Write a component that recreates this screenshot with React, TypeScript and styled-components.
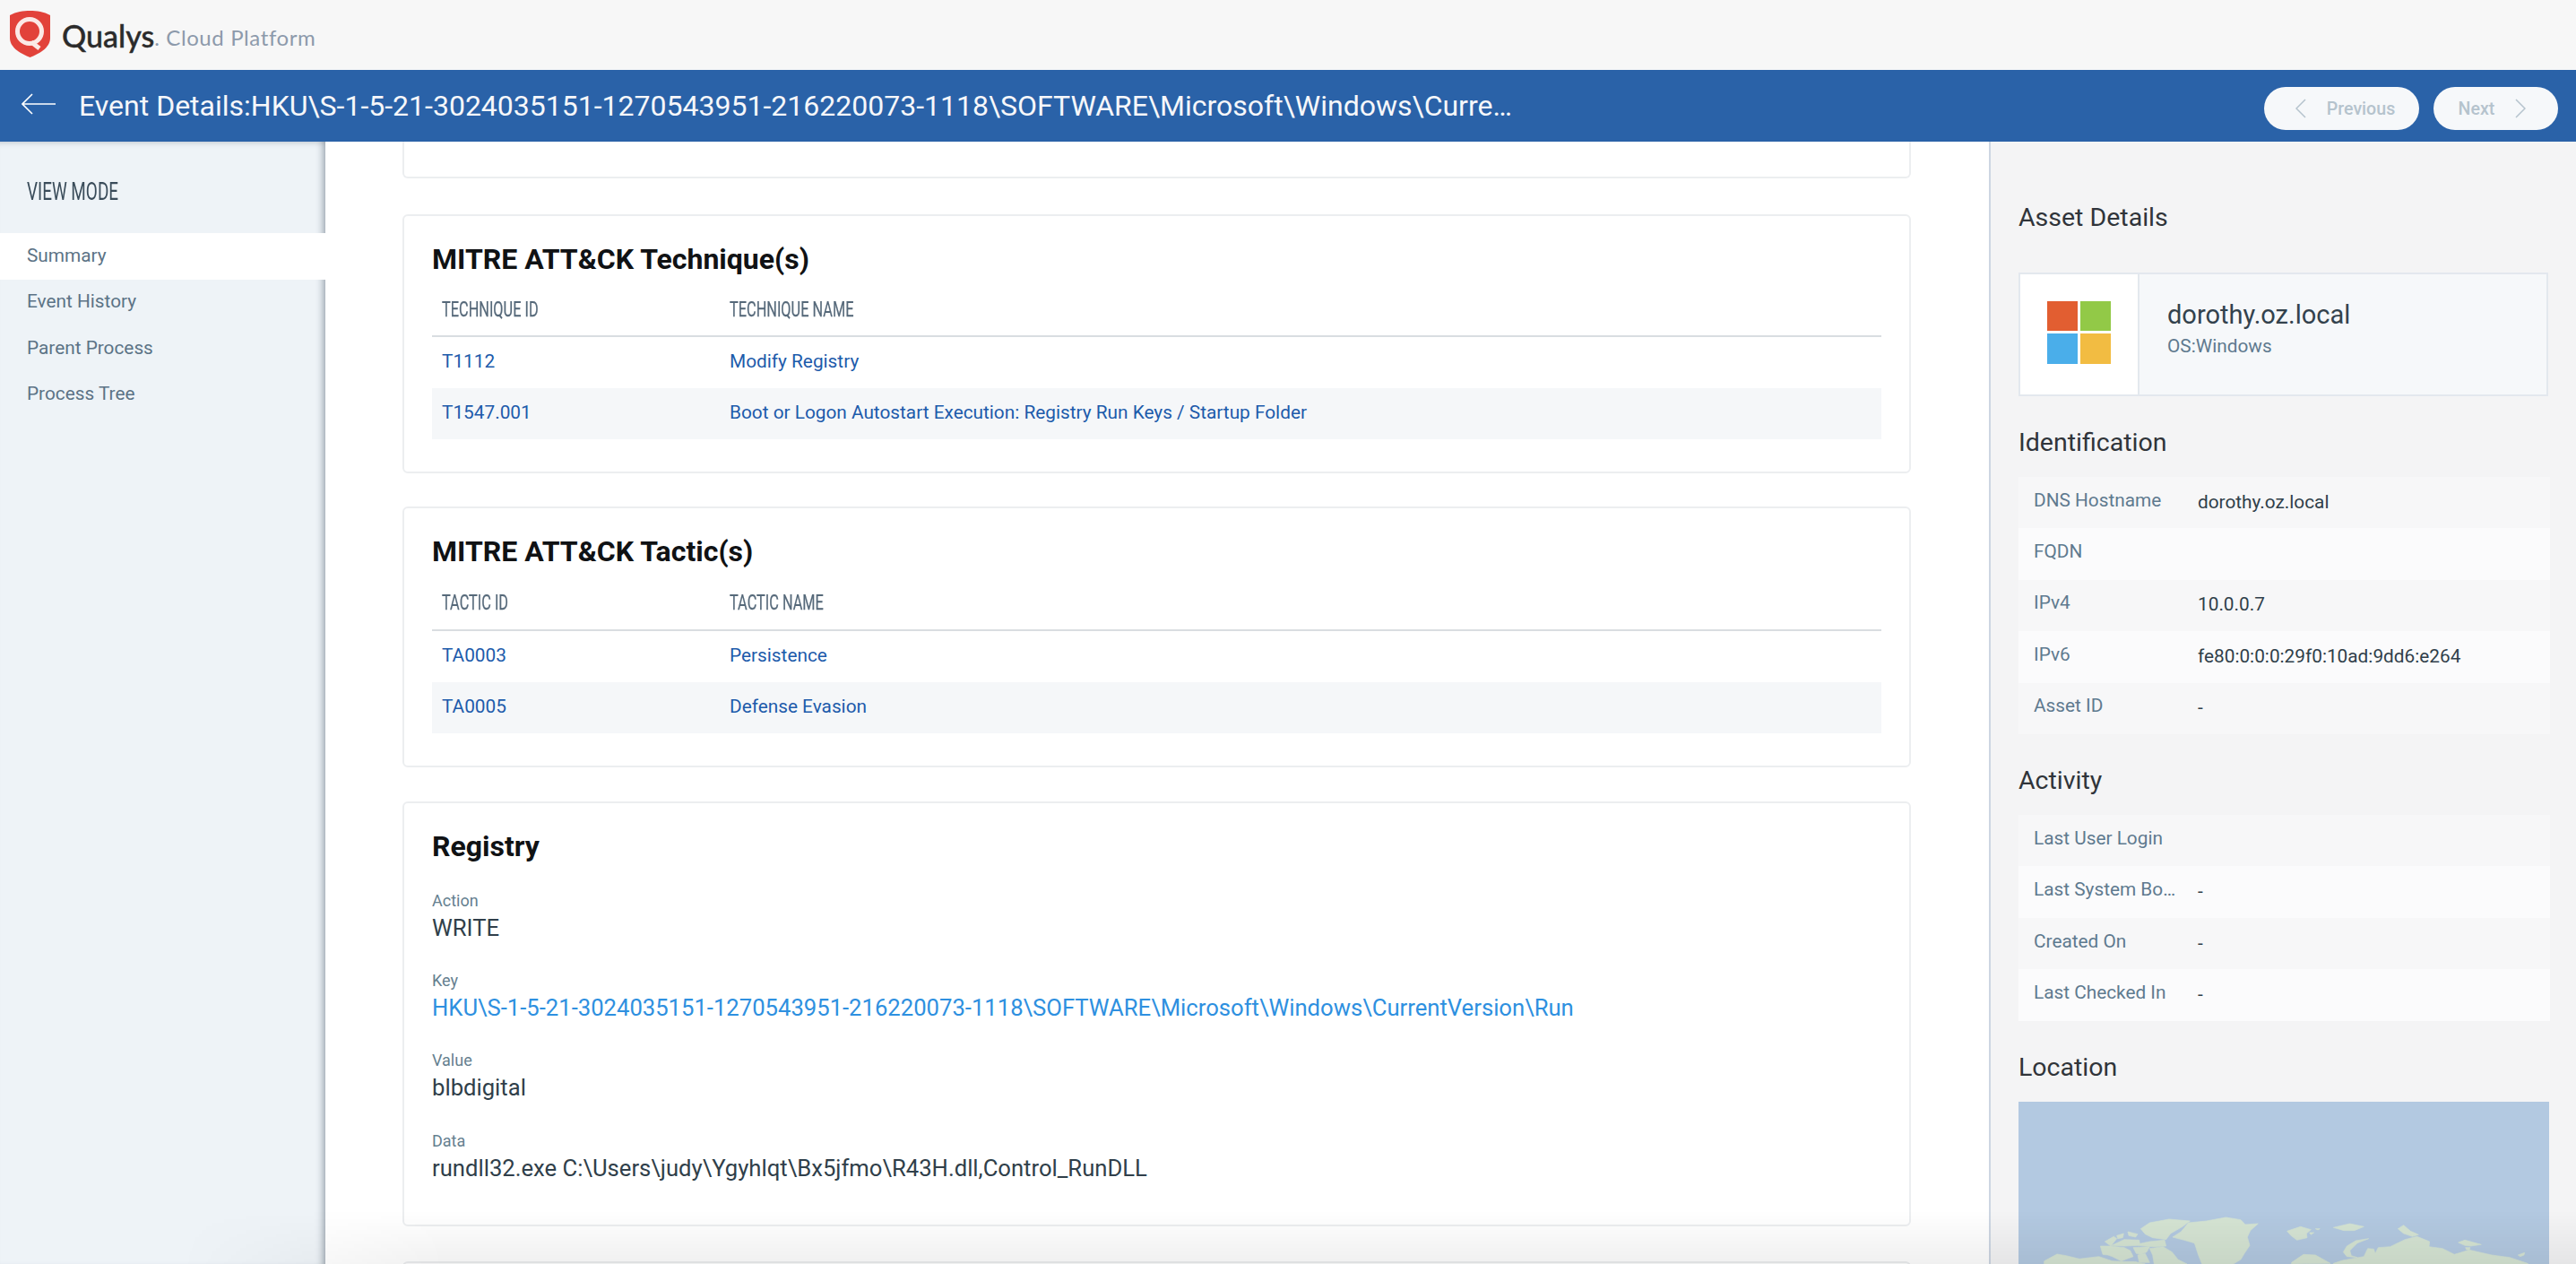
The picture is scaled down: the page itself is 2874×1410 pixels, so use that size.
import React from "react";
import styled, { createGlobalStyle } from "styled-components";

const Global = createGlobalStyle`
  html, body { margin: 0; padding: 0; height: 100%; background: #fff; }
  #root { height: 100%; }
  * { box-sizing: border-box; }
  body { font-family: Roboto, "Liberation Sans", sans-serif; -webkit-font-smoothing: antialiased; }
`;

const Page = styled.div`
  position: relative;
  display: flex;
  flex-direction: column;
  height: 1410px;
  overflow: hidden;
`;
const BrandBar = styled.header`
  height: 78px;
  flex: none;
  background: #f7f7f7;
  display: flex;
  align-items: center;
  padding: 0 0 0 11px;
`;
const Shield = styled.svg`
  width: 45px;
  height: 52px;
  margin: -2px 13px 0 0;
`;
const Wordmark = styled.span`
  font-family: Lato, sans-serif;
  font-size: 34px;
  font-weight: 500;
  color: #2b2b2b;
  -webkit-text-stroke: 0.4px #2b2b2b;
`;
const Tagline = styled.span`
  font-family: Lato, sans-serif;
  font-size: 24px;
  color: #8d9aab;
  letter-spacing: 0.6px;
  padding-top: 5px;
`;
const TitleBar = styled.div`
  height: 80px;
  flex: none;
  background: #2a62a8;
  display: flex;
  align-items: center;
  padding: 0 20px 0 24px;
`;
const BackIcon = styled.svg`
  width: 39px;
  height: 24px;
  flex: none;
  margin: -4px 25px 0 0;
`;
const Title = styled.h1`
  margin: 0;
  width: 1600px;
  color: #f6f7fa;
  font-size: 32px;
  font-weight: 400;
  white-space: nowrap;
  overflow: hidden;
  text-overflow: ellipsis;
`;
const Pager = styled.div`
  margin: 6px 0 0 auto;
  display: flex;
  gap: 16px;
`;
const PagerButton = styled.button<{ $w: number; $left?: number; $right?: number }>`
  width: ${(p) => p.$w}px;
  height: 48px;
  border: 0;
  border-radius: 24px;
  background: #f6f8fa;
  color: #b5c3cd;
  font: 500 19.6px Roboto, sans-serif;
  display: flex;
  align-items: center;
  justify-content: center;
  gap: 23px;
  padding: 0 ${(p) => p.$right ?? 0}px 0 ${(p) => p.$left ?? 0}px;
`;
const Chevron = styled.svg`
  width: 12px;
  height: 22px;
  flex: none;
`;
const Body = styled.div`
  flex: 1;
  display: flex;
  min-height: 0;
`;
const Sidebar = styled.aside`
  width: 363px;
  flex: none;
  background: #eef3f7;
  box-shadow: inset -9px 0 8px -7px rgba(70, 85, 100, 0.55), inset 0 7px 6px -6px rgba(70, 85, 100, 0.25);
`;
const SidebarHeading = styled.div`
  height: 102px;
  padding: 43px 0 0 30px;
  font-size: 27px;
  line-height: 27px;
  color: #3a4c5a;
  white-space: nowrap;
`;
const Squeezed = styled.span<{ $x: number }>`
  display: inline-block;
  transform: scaleX(${(p) => p.$x});
  transform-origin: left center;
  white-space: nowrap;
`;
const NavItem = styled.div<{ $active?: boolean }>`
  height: 51.5px;
  padding: 0 0 2px 30px;
  display: flex;
  align-items: center;
  font-size: 20.8px;
  color: #5c7386;
  background: ${(p) => (p.$active ? "#fff" : "transparent")};
`;
const Main = styled.main`
  flex: 1;
  min-width: 0;
  background: #fff;
  padding: 0 87px 0 86px;
`;
const Card = styled.section<{ $top: number; $h: number; $clipped?: boolean }>`
  height: ${(p) => p.$h}px;
  margin-top: ${(p) => p.$top}px;
  border: 2px solid #eceef0;
  border-top-width: ${(p) => (p.$clipped ? 0 : 2)}px;
  border-radius: ${(p) => (p.$clipped ? "0 0 6px 6px" : "6px")};
  background: #fff;
  padding: 0 31px;
`;
const CardTitle = styled.h2`
  margin: 0;
  padding-top: 30px;
  height: 72px;
  font-size: 32px;
  line-height: 36px;
  font-weight: 700;
  color: #101214;
`;
const TableHead = styled.div<{ $h: number }>`
  display: grid;
  grid-template-columns: 321px 1fr;
  height: ${(p) => p.$h}px;
  padding: 2px 11px 0;
  align-items: center;
  border-bottom: 2px solid #d9dde1;
  font-size: 24px;
  line-height: 28px;
  color: #56697a;
  -webkit-text-stroke: 0.25px #56697a;
`;
const TableRow = styled.div<{ $shade?: boolean }>`
  display: grid;
  grid-template-columns: 321px 1fr;
  height: 57px;
  padding: 0 11px 3px;
  align-items: center;
  font-size: 20.8px;
  color: #1d5bab;
  background: ${(p) => (p.$shade ? "#f5f7f9" : "#fff")};
`;
const Fields = styled.div`
  padding-top: 22px;
`;
const Field = styled.div`
  height: 89.2px;
`;
const FieldLabel = styled.div`
  font-size: 18px;
  line-height: 22px;
  padding-top: 4px;
  height: 28px;
  color: #65808f;
`;
const FieldValue = styled.div<{ $link?: boolean }>`
  font-size: 25.65px;
  line-height: 34px;
  color: ${(p) => (p.$link ? "#2e90e0" : "#303f4a")};
  white-space: nowrap;
`;
const Aside = styled.aside`
  width: 655px;
  flex: none;
  background: #f4f4f5;
  border-left: 2px solid #cdd6e2;
  padding: 0 28px 0 31px;
`;
const AsideHeading = styled.h3<{ $top: number; $bottom: number }>`
  margin: ${(p) => p.$top}px 0 ${(p) => p.$bottom}px;
  font-size: 28.5px;
  line-height: 32px;
  font-weight: 400;
  color: #30343a;
`;
const AssetCard = styled.div`
  width: 591px;
  height: 138px;
  display: flex;
  border: 2px solid #e3e8ee;
  background: #f6f8fa;
`;
const OsTile = styled.div`
  width: 133px;
  flex: none;
  background: #fff;
  border-right: 2px solid #e3e8ee;
  padding: 30px 0 0 30px;
`;
const WinLogo = styled.svg`
  width: 71px;
  height: 70px;
  display: block;
`;
const AssetText = styled.div`
  padding: 26px 0 0 31px;
`;
const AssetName = styled.div`
  font-size: 29px;
  line-height: 38px;
  color: #33424d;
`;
const AssetOs = styled.div`
  font-size: 20.8px;
  line-height: 28px;
  margin-top: 2px;
  color: #5f7a8f;
`;
const InfoTable = styled.div`
  width: 593px;
`;
const InfoRow = styled.div<{ $alt?: boolean; $h: number }>`
  height: ${(p) => p.$h}px;
  display: grid;
  grid-template-columns: 183px 1fr;
  padding: 0 0 6px 17px;
  align-items: center;
  background: ${(p) => (p.$alt ? "#fbfbfc" : "#f7f7f8")};
`;
const InfoLabel = styled.div`
  font-size: 20.8px;
  color: #5f7a8f;
  overflow: hidden;
  white-space: nowrap;
  text-overflow: ellipsis;
  padding-right: 23px;
`;
const InfoValue = styled.div`
  font-size: 20.8px;
  color: #303f4a;
  padding-top: 4px;
  white-space: nowrap;
`;
const MapBox = styled.div`
  width: 592px;
  height: 181px;
  background: #b3c9e1;
`;
const MapArt = styled.svg`
  display: block;
  width: 100%;
  height: 100%;
`;
const BottomFade = styled.div`
  position: absolute;
  left: 0;
  right: 0;
  bottom: 0;
  height: 60px;
  pointer-events: none;
  background: linear-gradient(180deg, rgba(0, 0, 0, 0), rgba(0, 0, 0, 0.06));
  -webkit-mask-image: linear-gradient(90deg, transparent 0, transparent 200px, #000 500px);
  mask-image: linear-gradient(90deg, transparent 0, transparent 200px, #000 500px);
`;

const landWest = [
  "462,90 490,72 515,42 575,36 640,24 690,32 705,48 748,45 722,68 712,90 720,118 702,145 690,165 665,180 560,180 548,150 535,110 500,100",
  "355,62 385,42 450,30 520,36 495,55 455,78 440,98 395,92 370,80",
  "235,105 265,88 275,95 255,120",
  "275,85 298,78 295,92 278,95",
  "312,72 345,80 338,90 315,85",
  "258,118 300,98 350,100 352,112 385,105 435,100 440,120 395,122 345,118 300,120",
  "220,120 255,120 300,125 320,135 330,155 290,170 260,155 245,150 228,148",
  "32,170 75,147 105,152 150,163 215,155 260,170 300,172 335,172 370,180 32,180",
  "330,125 385,122 375,140 355,148 340,145",
  "385,128 430,122 460,140 480,165 510,180 400,180 395,150",
  "345,150 370,145 385,175 350,175",
];
const landEast = [
  "5,70 50,55 85,65 70,78 72,92 38,100 18,85",
  "80,75 95,75 85,82",
  "100,62 115,62 108,66",
  "160,58 215,45 262,55 230,68 195,68",
  "278,95 240,110 215,135 220,152 240,158 205,155 193,140 205,120 235,102",
  "20,175 60,148 100,150 150,178 20,180",
  "160,178 190,168 262,155 275,128 295,130 300,145 310,125 350,122 400,98 440,88 482,105 480,122 525,128 565,148 615,133 690,150 750,158 810,178 812,180 160,180",
  "376,62 395,50 418,70 445,82 425,88 395,78",
  "578,108 600,100 655,115 620,120 600,118",
  "602,125 618,125 615,132 605,132",
  "778,150 800,142 798,150 785,155",
];

const techniques = [
  ["T1112", "Modify Registry"],
  ["T1547.001", "Boot or Logon Autostart Execution: Registry Run Keys / Startup Folder"],
];
const tactics = [
  ["TA0003", "Persistence"],
  ["TA0005", "Defense Evasion"],
];
const identification = [
  ["DNS Hostname", "dorothy.oz.local"],
  ["FQDN", ""],
  ["IPv4", "10.0.0.7"],
  ["IPv6", "fe80:0:0:0:29f0:10ad:9dd6:e264"],
  ["Asset ID", "-"],
];
const activity = [
  ["Last User Login", ""],
  ["Last System Boot", "-"],
  ["Created On", "-"],
  ["Last Checked In", "-"],
];

function MitreCard({ top, h, head, title, a, b, rows }: { top: number; h: number; head: number; title: string; a: string; b: string; rows: string[][] }) {
  return (
    <Card $top={top} $h={h}>
      <CardTitle>{title}</CardTitle>
      <TableHead $h={head}>
        <Squeezed $x={0.68}>{a}</Squeezed>
        <Squeezed $x={0.68}>{b}</Squeezed>
      </TableHead>
      {rows.map((r, i) => (
        <TableRow key={r[0]} $shade={i % 2 === 1}>
          <span>{r[0]}</span>
          <span>{r[1]}</span>
        </TableRow>
      ))}
    </Card>
  );
}

function Info({ rows, h }: { rows: string[][]; h: number }) {
  return (
    <InfoTable>
      {rows.map((r, i) => (
        <InfoRow key={r[0]} $alt={i % 2 === 1} $h={h}>
          <InfoLabel>{r[0]}</InfoLabel>
          <InfoValue>{r[1]}</InfoValue>
        </InfoRow>
      ))}
    </InfoTable>
  );
}

function Land({ x, shapes }: { x: number; shapes: string[] }) {
  return (
    <g transform={`translate(${x},363)`}>
      {shapes.map((p) => (
        <polygon key={p} points={p} fill="#d5e4d3" stroke="#d5e4d3" strokeWidth="2" strokeLinejoin="round" />
      ))}
    </g>
  );
}

export default function App() {
  return (
    <Page>
      <Global />
      <BrandBar>
        <Shield viewBox="0 0 45 52">
          <path d="M22.5 0C30 0 38 1.2 45 5v25c0 12-13 18-22.5 22C13 48 0 42 0 30V5C7 1.2 15 0 22.5 0Z" fill="#e2423a" />
          <circle cx="22" cy="23" r="13.5" fill="none" stroke="#fbe9e6" strokeWidth="5" />
          <path d="M24 35l9 7" stroke="#fbe9e6" strokeWidth="5" fill="none" />
        </Shield>
        <Wordmark>Qualys</Wordmark>
        <Tagline>. Cloud Platform</Tagline>
      </BrandBar>
      <TitleBar>
        <BackIcon viewBox="0 0 39 24">
          <path d="M38 12H1M12 1L1 12l11 11" fill="none" stroke="#fff" strokeWidth="1.6" />
        </BackIcon>
        <Title>Event Details:HKU\S-1-5-21-3024035151-1270543951-216220073-1118\SOFTWARE\Microsoft\Windows\CurrentVersion\Run</Title>
        <Pager>
          <PagerButton $w={173} $left={8}>
            <Chevron viewBox="0 0 12 22">
              <path d="M11 1L1 11l10 10" fill="none" stroke="#b5c3cd" strokeWidth="1.5" />
            </Chevron>
            Previous
          </PagerButton>
          <PagerButton $w={139} $right={8}>
            Next
            <Chevron viewBox="0 0 12 22">
              <path d="M1 1l10 10L1 21" fill="none" stroke="#b5c3cd" strokeWidth="1.5" />
            </Chevron>
          </PagerButton>
        </Pager>
      </TitleBar>
      <Body>
        <Sidebar>
          <SidebarHeading>
            <Squeezed $x={0.7}>VIEW MODE</Squeezed>
          </SidebarHeading>
          <NavItem $active>Summary</NavItem>
          <NavItem>Event History</NavItem>
          <NavItem>Parent Process</NavItem>
          <NavItem>Process Tree</NavItem>
        </Sidebar>
        <Main>
          <Card $top={0} $h={41} $clipped />
          <MitreCard top={40} h={289} head={63} title="MITRE ATT&CK Technique(s)" a="TECHNIQUE ID" b="TECHNIQUE NAME" rows={techniques} />
          <MitreCard top={37} h={291} head={65} title="MITRE ATT&CK Tactic(s)" a="TACTIC ID" b="TACTIC NAME" rows={tactics} />
          <Card $top={38} $h={474}>
            <CardTitle>Registry</CardTitle>
            <Fields>
              <Field>
                <FieldLabel>Action</FieldLabel>
                <FieldValue>WRITE</FieldValue>
              </Field>
              <Field>
                <FieldLabel>Key</FieldLabel>
                <FieldValue $link>HKU\S-1-5-21-3024035151-1270543951-216220073-1118\SOFTWARE\Microsoft\Windows\CurrentVersion\Run</FieldValue>
              </Field>
              <Field>
                <FieldLabel>Value</FieldLabel>
                <FieldValue>blbdigital</FieldValue>
              </Field>
              <Field>
                <FieldLabel>Data</FieldLabel>
                <FieldValue>rundll32.exe C:\Users\judy\Ygyhlqt\Bx5jfmo\R43H.dll,Control_RunDLL</FieldValue>
              </Field>
            </Fields>
          </Card>
          <Card $top={39} $h={60} />
        </Main>
        <Aside>
          <AsideHeading $top={69} $bottom={45}>Asset Details</AsideHeading>
          <AssetCard>
            <OsTile>
              <WinLogo viewBox="0 0 71 70">
                <rect x="0" y="0" width="34" height="33" fill="#e25e31" />
                <rect x="37" y="0" width="34" height="33" fill="#92c947" />
                <rect x="0" y="36" width="34" height="34" fill="#4aaeea" />
                <rect x="37" y="36" width="34" height="34" fill="#f2bc42" />
              </WinLogo>
            </OsTile>
            <AssetText>
              <AssetName>dorothy.oz.local</AssetName>
              <AssetOs>OS:Windows</AssetOs>
            </AssetText>
          </AssetCard>
          <AsideHeading $top={36} $bottom={22}>Identification</AsideHeading>
          <Info rows={identification} h={57.4} />
          <AsideHeading $top={36} $bottom={22}>Activity</AsideHeading>
          <Info rows={activity} h={57.5} />
          <AsideHeading $top={36} $bottom={22}>Location</AsideHeading>
          <MapBox>
            <MapArt viewBox="0 0 1776 543" preserveAspectRatio="none">
              <Land x={54} shapes={landWest} />
              <Land x={894} shapes={landEast} />
            </MapArt>
          </MapBox>
        </Aside>
      </Body>
      <BottomFade />
    </Page>
  );
}
